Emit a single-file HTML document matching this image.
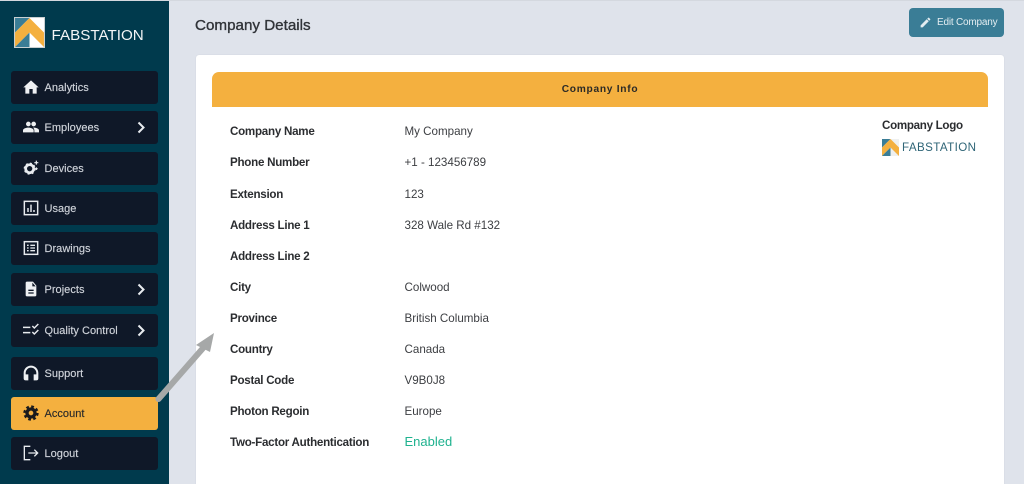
<!DOCTYPE html>
<html><head><meta charset="utf-8">
<style>
*{box-sizing:border-box;margin:0;padding:0}
html,body{width:1024px;height:484px;overflow:hidden}
body{background:#dfe3eb;font-family:"Liberation Sans",sans-serif;position:relative}
.top{position:absolute;left:0;top:0;width:1024px;height:1px;background:#d4d8df}
.side{position:absolute;left:0;top:1px;width:169px;height:483px;background:#003a4d}
.brand{position:absolute;left:51.5px;top:26px;font-size:15.2px;color:#f2f5f6;line-height:20px}
.it{position:absolute;left:11px;width:147px;height:33px;background:#0f1828;border-radius:3px;color:#cfd3da;font-size:11px;line-height:34.500px;padding-left:33.5px;letter-spacing:.03px;-webkit-text-stroke:.15px #cfd3da}
.it.on{background:#f4b03f;color:#2a2a2a;-webkit-text-stroke:.15px #2a2a2a}
.it svg.i{position:absolute;left:11.5px;top:8px;width:16px;height:16px}
.it svg.c{position:absolute;left:125px;top:10px;width:10px;height:13px}
h1{position:absolute;left:195px;top:17px;font-size:15.2px;line-height:18px;color:#303338;font-weight:normal;-webkit-text-stroke:.35px #303338}
.btn{position:absolute;left:909px;top:8px;width:95px;height:29px;background:#3a7d96;border-radius:4px;color:#e3edf1;font-size:10px;line-height:30px;padding-left:28px;letter-spacing:-.2px}
.btn svg{position:absolute;left:10px;top:8px;width:13px;height:13px}
.card{position:absolute;left:196px;top:55px;width:808px;height:440px;background:#fff;border-radius:3px;box-shadow:0 0 1px #c2c7d0}
.head{position:absolute;left:212px;top:72px;width:776px;height:35px;background:#f4b03f;border-radius:7px 7px 0 0;text-align:center;font-size:10.2px;font-weight:bold;line-height:36px;letter-spacing:.72px;color:#2b2a26}
.l{position:absolute;left:230px;font-size:11.6px;line-height:14px;font-weight:bold;color:#2b2d30;letter-spacing:-.26px;margin-top:1px}
.v{position:absolute;left:404.5px;font-size:11.6px;line-height:14px;color:#3c3e42;margin-top:1px}
.logot{position:absolute;left:882px;top:118.500px;font-size:11.6px;line-height:14px;font-weight:bold;color:#2b2d30;letter-spacing:-.3px}
.logof{position:absolute;left:902px;top:140px;font-size:11.6px;line-height:15px;color:#2f6577;letter-spacing:.4px}
</style></head><body>
<div class="top"></div>
<div class="side"></div>
<svg style="position:absolute;left:14px;top:17px" width="31" height="31" viewBox="-1 -1 30 30">
<rect x="-1" y="-1" width="30" height="30" fill="#c9d0d2"/><rect width="28" height="28" fill="#fff"/>
<polygon points="0,0 14,0 0,14" fill="#3a7d96"/>
<polygon points="0,14 14,0 28,14 28,28 14,14 0,28" fill="#f4b03f"/>
<polygon points="0,28 14,14 14,28" fill="#3a7d96"/>
</svg>
<div class="brand">FABSTATION</div>

<div class="it" style="top:71px">Analytics<svg class="i" viewBox="0 0 24 24" fill="#eef0f3"><path d="M9.500 22v-7h5v7h6v-9.500h3L12 2L.5 12.500h3V22z"/></svg></div>
<div class="it" style="top:111px">Employees<svg class="i" viewBox="0 0 24 24" fill="#eef0f3"><path d="M16 11a3.500 3.500 0 1 0 0-7a3.500 3.500 0 0 0 0 7zm-8 0a3.500 3.500 0 1 0 0-7a3.500 3.500 0 0 0 0 7zm0 2c-2.600 0-8 1.300-8 4v3h16v-3c0-2.700-5.400-4-8-4zm8 0h-1c1.200.9 2 2.200 2 4v3h7v-3c0-2.700-5.400-4-8-4z"/></svg><svg class="c" viewBox="0 0 10 13"><path d="M2.500 1.500L7.500 6.500L2.500 11.500" fill="none" stroke="#e8ebef" stroke-width="2"/></svg></div>
<div class="it" style="top:152px">Devices<svg class="i" viewBox="0 0 24 24"><circle cx="10" cy="13" r="6" fill="none" stroke="#e8ebef" stroke-width="4"/><circle cx="10" cy="13" r="8" fill="none" stroke="#e8ebef" stroke-width="2" stroke-dasharray="3 3.300"/><path d="M20 1v6M17 4h6M20 11v4M18 13h4" stroke="#e8ebef" stroke-width="1.800"/></svg></div>
<div class="it" style="top:192px">Usage<svg class="i" viewBox="0 0 24 24" fill="none" stroke="#e8ebef"><rect x="2" y="2" width="20" height="20" stroke-width="2.200"/><path d="M7.500 18v-6M12 18V7M16.500 18v-3" stroke-width="2.200"/></svg></div>
<div class="it" style="top:232px">Drawings<svg class="i" viewBox="0 0 24 24" fill="none" stroke="#e8ebef"><rect x="2" y="2.500" width="20" height="19" stroke-width="2.200"/><path d="M6 8h2.500M11 8h7M6 12h2.500M11 12h7M6 16h2.500M11 16h7" stroke-width="2"/></svg></div>
<div class="it" style="top:273px">Projects<svg class="i" viewBox="0 0 24 24" fill="#eef0f3"><path d="M6 1h9l5 6v14a2 2 0 0 1-2 2H6a2 2 0 0 1-2-2V3a2 2 0 0 1 2-2zm8 1.500V8h5zM8 13v2h8v-2zm0 4v2h8v-2z" fill-rule="evenodd"/></svg><svg class="c" viewBox="0 0 10 13"><path d="M2.500 1.500L7.500 6.500L2.500 11.500" fill="none" stroke="#e8ebef" stroke-width="2"/></svg></div>
<div class="it" style="top:314px">Quality Control<svg class="i" viewBox="0 0 24 24" fill="none" stroke="#e8ebef" stroke-width="2.200"><path d="M0 8h11M0 16h11M14 6l3 3l6-6M14 15l3 3l6-6"/></svg><svg class="c" viewBox="0 0 10 13"><path d="M2.500 1.500L7.500 6.500L2.500 11.500" fill="none" stroke="#e8ebef" stroke-width="2"/></svg></div>
<div class="it" style="top:357px">Support<svg class="i" viewBox="0 0 24 24" fill="#eef0f3"><path d="M12 1C5.900 1 1 5.900 1 12v8a3 3 0 0 0 3 3h4v-9H4v-2a8 8 0 0 1 16 0v2h-4v9h4a3 3 0 0 0 3-3v-8c0-6.100-4.900-11-11-11z"/></svg></div>
<div class="it on" style="top:397px">Account<svg class="i" viewBox="0 0 24 24"><circle cx="12" cy="12" r="6" fill="none" stroke="#1b1b1d" stroke-width="5"/><circle cx="12" cy="12" r="9.500" fill="none" stroke="#1b1b1d" stroke-width="4" stroke-dasharray="4 3.460"/></svg></div>
<div class="it" style="top:437px">Logout<svg class="i" viewBox="0 0 24 24" fill="none" stroke="#e8ebef" stroke-width="2"><path d="M11 2H2v20h9M8 12h14M17 7l5 5l-5 5"/></svg></div>

<h1>Company Details</h1>
<div class="btn"><svg viewBox="0 0 24 24" fill="#e3edf1"><path d="M3 17.200V21h3.800L18 9.800L14.200 6zM20.700 7a1 1 0 0 0 0-1.400l-2.300-2.300a1 1 0 0 0-1.400 0l-1.800 1.800l3.700 3.700z"/></svg>Edit Company</div>
<div class="card"></div>
<div class="head">Company Info</div>

<div class="l" style="top:124px">Company Name</div><div class="v" style="top:124px">My Company</div>
<div class="l" style="top:155px">Phone Number</div><div class="v" style="top:155px">+1 - 123456789</div>
<div class="l" style="top:186.500px">Extension</div><div class="v" style="top:186.500px">123</div>
<div class="l" style="top:218px">Address Line 1</div><div class="v" style="top:218px">328 Wale Rd #132</div>
<div class="l" style="top:249px">Address Line 2</div>
<div class="l" style="top:280px">City</div><div class="v" style="top:280px">Colwood</div>
<div class="l" style="top:311px">Province</div><div class="v" style="top:311px">British Columbia</div>
<div class="l" style="top:342px">Country</div><div class="v" style="top:342px">Canada</div>
<div class="l" style="top:373px">Postal Code</div><div class="v" style="top:373px">V9B0J8</div>
<div class="l" style="top:404px">Photon Regoin</div><div class="v" style="top:404px">Europe</div>
<div class="l" style="top:435px">Two-Factor Authentication</div><div class="v" style="top:434px;color:#1fb28f;font-size:13px">Enabled</div>

<div class="logot">Company Logo</div>
<svg style="position:absolute;left:882px;top:139px" width="17" height="17" viewBox="0 0 28 28">
<rect width="28" height="28" fill="#eef0f0"/>
<polygon points="0,0 14,0 0,14" fill="#3a7d96"/>
<polygon points="0,14 14,0 28,14 28,28 14,14 0,28" fill="#f4b03f"/>
<polygon points="0,28 14,14 14,28" fill="#3a7d96"/>
</svg>
<div class="logof">FABSTATION</div>

<svg style="position:absolute;left:0;top:0" width="1024" height="484" viewBox="0 0 1024 484">
<path d="M158.500 399L204 347" stroke="#a6a8a8" stroke-width="6" stroke-linecap="round"/>
<polygon points="214,333 196,345 210,352" fill="#a6a8a8"/>
</svg>
</body></html>
